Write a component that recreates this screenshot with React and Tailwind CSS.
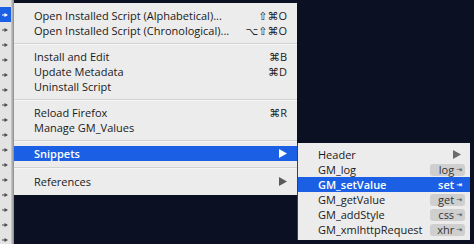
import React from "react";

const FONT = { fontFamily: '"Open Sans", "DejaVu Sans", sans-serif' };

function Tri({ color }) {
  return (
    <svg width="8" height="9" viewBox="0 0 8 9">
      <polygon points="0,0 8,4.5 0,9" fill={color} />
    </svg>
  );
}

function Bullet({ color }) {
  return (
    <svg width="6" height="4" viewBox="0 0 6 4">
      <rect x="0" y="1.5" width="3" height="1" fill={color} />
      <polygon points="2.5,0 6,2 2.5,4" fill={color} />
    </svg>
  );
}

function Item({ label, shortcut, arrow, active }) {
  return (
    <div
      className={
        "flex h-[15px] items-center justify-between pl-[20px] pr-[10px] " +
        (active ? "bg-[#1a5fe4] text-white font-semibold" : "text-[#1a1a1a]")
      }
    >
      <span>{label}</span>
      {shortcut && <span className="text-[#222]">{shortcut}</span>}
      {arrow && <Tri color={active ? "#ffffff" : "#5a5a5a"} />}
    </div>
  );
}

function Sep() {
  return (
    <div className="flex h-[11px] flex-col justify-center">
      <div className="h-px bg-[#d2d2d2]" />
      <div className="h-px bg-[#f6f6f6]" />
    </div>
  );
}

function Snip({ label, badge, active, arrow }) {
  return (
    <div
      className={
        "flex h-[15px] items-center justify-between pl-[20px] pr-[5px] " +
        (active ? "bg-[#1a5fe4] text-white font-semibold" : "text-[#1a1a1a]")
      }
    >
      <span>{label}</span>
      {arrow && (
        <span className="pr-[4px]">
          <Tri color="#6a6a6a" />
        </span>
      )}
      {badge && (
        <span
          className={
            "flex h-[12px] w-[35px] items-center justify-end gap-[2px] rounded-[3px] pr-[3px] leading-none " +
            (active ? "text-white" : "bg-[#cfcfcf] text-[#333]")
          }
        >
          <span>{badge}</span>
          <span className={"text-[7px] " + (active ? "text-white" : "text-[#555]")}>⇥</span>
        </span>
      )}
    </div>
  );
}

export default function App() {
  const rows = Array.from({ length: 16 });
  return (
    <div
      className="relative flex h-[244px] w-[474px] overflow-hidden bg-[#0b1123] text-[11px] font-medium leading-none"
      style={FONT}
    >
      <div className="flex h-full">
        <div className="flex w-[11px] flex-col bg-[#e3e3e3] pt-[7px]">
          {rows.map((_, i) => (
            <div
              key={i}
              className={
                "flex h-[15px] shrink-0 items-center pl-[2px] " + (i === 0 ? "bg-[#1a5fe4]" : "")
              }
            >
              <Bullet color={i === 0 ? "#ffffff" : "#4a4a4a"} />
            </div>
          ))}
        </div>
        <div className="w-[3px] bg-gradient-to-r from-[#cfcfcf] to-[#8a8a8a]" />
      </div>

      <div className="absolute left-[14px] top-[3px] w-[283px] bg-[#ececec] pb-[6px] pt-[5px]">
        <Item label="Open Installed Script (Alphabetical)..." shortcut="⇧⌘O" />
        <Item label="Open Installed Script (Chronological)..." shortcut="⌥⇧⌘O" />
        <Sep />
        <Item label="Install and Edit" shortcut="⌘B" />
        <Item label="Update Metadata" shortcut="⌘D" />
        <Item label="Uninstall Script" />
        <Sep />
        <Item label="Reload Firefox" shortcut="⌘R" />
        <Item label="Manage GM_Values" />
        <Sep />
        <Item label="Snippets" arrow active />
        <div className="h-[1.5px]" />
        <Sep />
        <Item label="References" arrow />
      </div>

      <div className="absolute left-[297px] top-[143px] w-[173px] border-l border-[#3a3f4f] bg-[#ececec] pb-[3px] pt-[4px]">
        <Snip label="Header" arrow />
        <Snip label="GM_log" badge="log" />
        <Snip label="GM_setValue" badge="set" active />
        <Snip label="GM_getValue" badge="get" />
        <Snip label="GM_addStyle" badge="css" />
        <Snip label="GM_xmlhttpRequest" badge="xhr" />
      </div>
    </div>
  );
}
